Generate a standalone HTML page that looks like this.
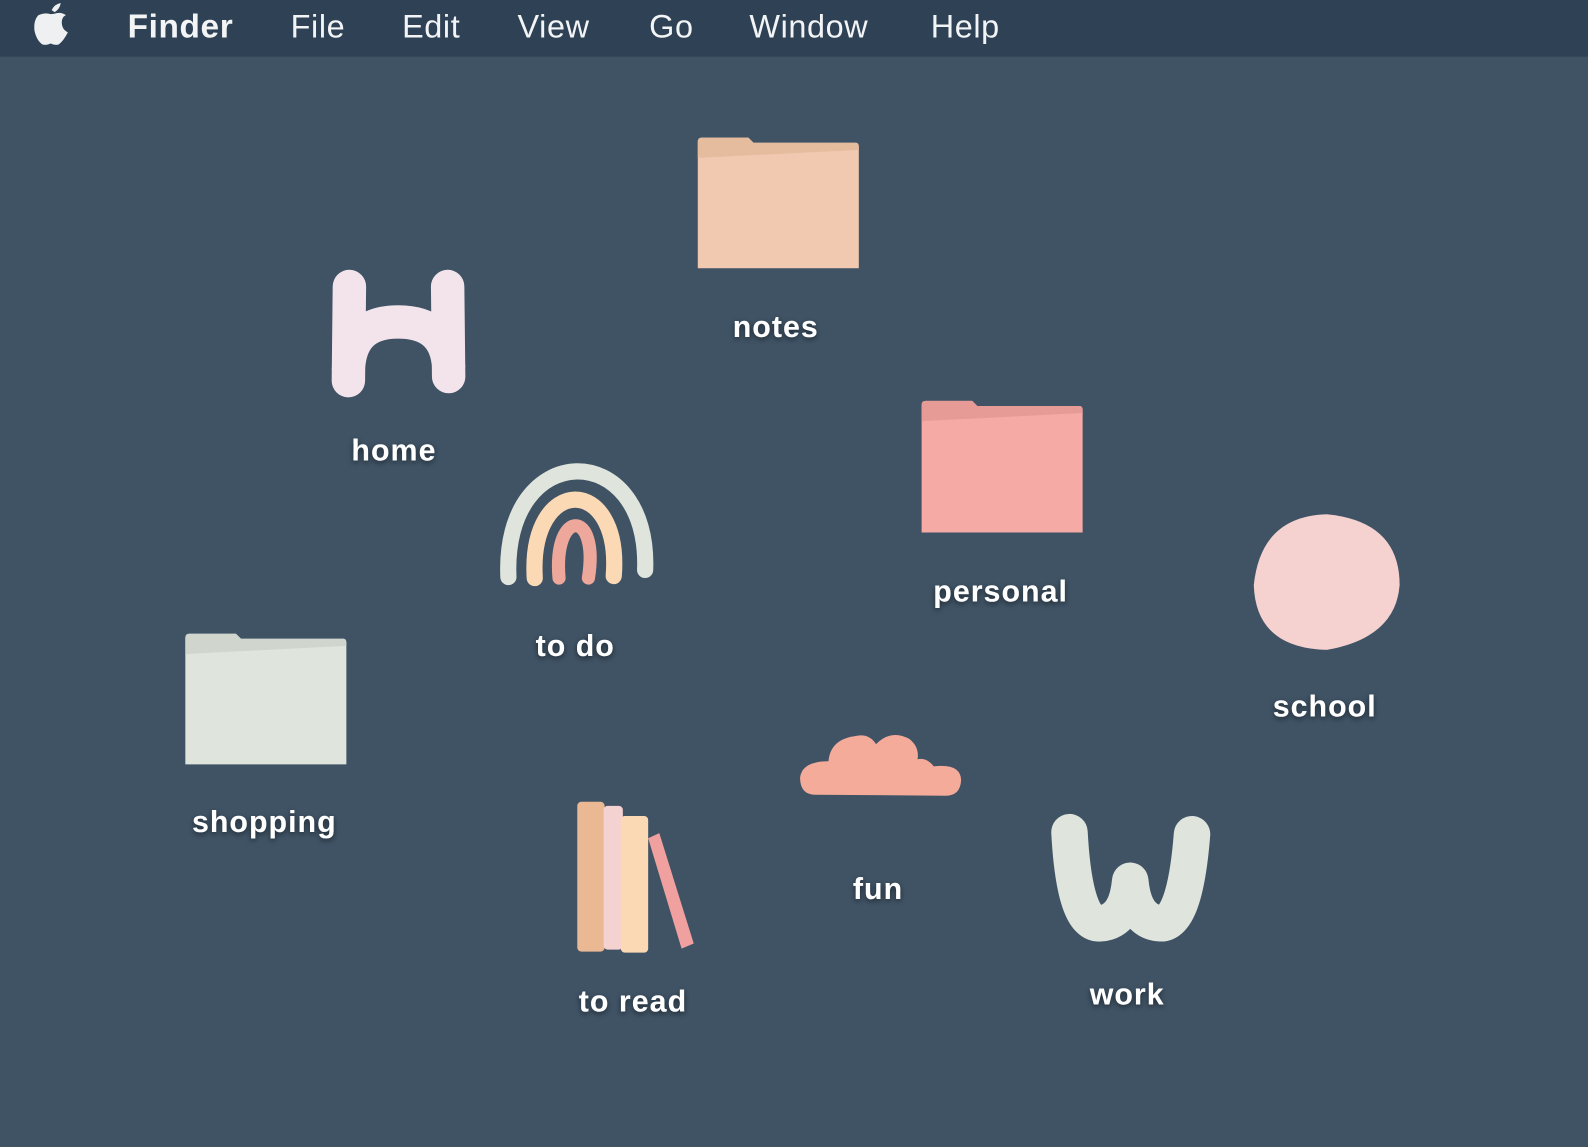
<!DOCTYPE html>
<html><head><meta charset="utf-8"><style>
html,body{margin:0;padding:0;width:1588px;height:1147px;overflow:hidden;background:#3f5365}
svg{display:block}
text{font-family:"Liberation Sans",sans-serif;}
.l{font-weight:bold;font-size:30px;letter-spacing:1px;fill:#fff;text-anchor:middle;filter:url(#sh)}
.m{font-size:32px;letter-spacing:0.6px;fill:#f2f4f6}
</style></head><body>
<svg width="1588" height="1147" viewBox="0 0 1568 1133" preserveAspectRatio="none">
<defs><filter id="sh" x="-20%" y="-40%" width="140%" height="180%"><feDropShadow dx="0" dy="2" stdDeviation="3" flood-color="#000" flood-opacity="0.55"/></filter></defs>
<rect width="1568" height="1133" fill="#3f5365"/>
<rect width="1568" height="56" fill="#2f4255"/>
<path d="M51 10 Q54 4 60 3 Q59 9 54 12 Z M50 14 Q44 12 38 15 Q33 20 34 30 Q36 40 42 44 Q46 45 50 43 Q54 45 58 44 Q63 40 67 32 Q61 29 61 22 Q61 17 65 15 Q61 12 56 13 Q53 14 50 14 Z" fill="#eef0f2"/>
<text x="126" y="37" class="m" style="font-weight:bold;font-size:33px">Finder</text>
<text x="287" y="37" class="m">File</text>
<text x="397" y="37" class="m">Edit</text>
<text x="511" y="37" class="m">View</text>
<text x="641" y="37" class="m">Go</text>
<text x="740" y="37" class="m">Window</text>
<text x="919" y="37" class="m">Help</text>

<path d="M689 140 Q689 136 693 136 L739 136 L744 141 L845 141 Q848 141 848 145 L848 265 L689 265 Z" fill="#f0c9b0"/>
<path d="M689 140 Q689 136 693 136 L739 136 L744 141 L845 141 Q848 141 848 145 L848 148 L689 156 Z" fill="#e6bc9f"/>
<path d="M910 400 Q910 396 914 396 L960 396 L965 401 L1066 401 Q1069 401 1069 405 L1069 526 L910 526 Z" fill="#f5aaa6"/>
<path d="M910 400 Q910 396 914 396 L960 396 L965 401 L1066 401 Q1069 401 1069 405 L1069 408 L910 416 Z" fill="#e69b96"/>
<path d="M183 630 Q183 626 187 626 L233 626 L238 631 L339 631 Q342 631 342 635 L342 755 L183 755 Z" fill="#dfe4dc"/>
<path d="M183 630 Q183 626 187 626 L233 626 L238 631 L339 631 Q342 631 342 635 L342 638 L183 646 Z" fill="#d0d6cd"/>

<path d="M345 283 L344 376 M442 283 L443 372 M344 365 Q346 318 393 318 Q440 318 443 362" stroke="#f3e4ec" stroke-width="33" stroke-linecap="round" fill="none"/>

<path d="M502 570 C496 432 642 432 637 563" stroke="#dfe4dc" stroke-width="16" stroke-linecap="round" fill="none"/>
<path d="M528 571 C522 468 614 468 606 569" stroke="#fcd9b5" stroke-width="16" stroke-linecap="round" fill="none"/>
<path d="M552 571 C546 502 592 502 581 571" stroke="#eda89b" stroke-width="13" stroke-linecap="round" fill="none"/>

<path d="M1310 508 Q1382 515 1382 578 Q1378 630 1310 642 Q1240 640 1238 578 Q1245 510 1310 508 Z" fill="#f5d2d0"/>

<path d="M805 785 Q790 785 790 768 Q792 752 818 752 Q820 730 845 727 Q858 724 865 735 Q880 720 898 730 Q908 738 906 750 Q915 748 922 757 Q949 754 949 771 Q948 786 934 786 Z" fill="#f4ab9a"/>

<rect x="570" y="792" width="27" height="148" rx="4" fill="#ebb894"/>
<rect x="596" y="796" width="19" height="142" rx="4" fill="#f5d2d2"/>
<rect x="613" y="806" width="27" height="135" rx="4" fill="#fcd9b5"/>
<path d="M640 828 L651 823 L685 932 L673 937 Z" fill="#f0a19f"/>

<path d="M1056 822 Q1061 915 1087 912 Q1112 910 1116 870 Q1120 910 1145 912 Q1170 914 1177 824" stroke="#dfe4dc" stroke-width="36" stroke-linecap="round" stroke-linejoin="round" fill="none"/>

<text x="766" y="333" class="l">notes</text>
<text x="389" y="455" class="l">home</text>
<text x="988" y="594" class="l">personal</text>
<text x="568" y="648" class="l">to do</text>
<text x="1308" y="708" class="l">school</text>
<text x="261" y="822" class="l">shopping</text>
<text x="867" y="888" class="l">fun</text>
<text x="625" y="999" class="l">to read</text>
<text x="1113" y="992" class="l">work</text>
</svg>
</body></html>
